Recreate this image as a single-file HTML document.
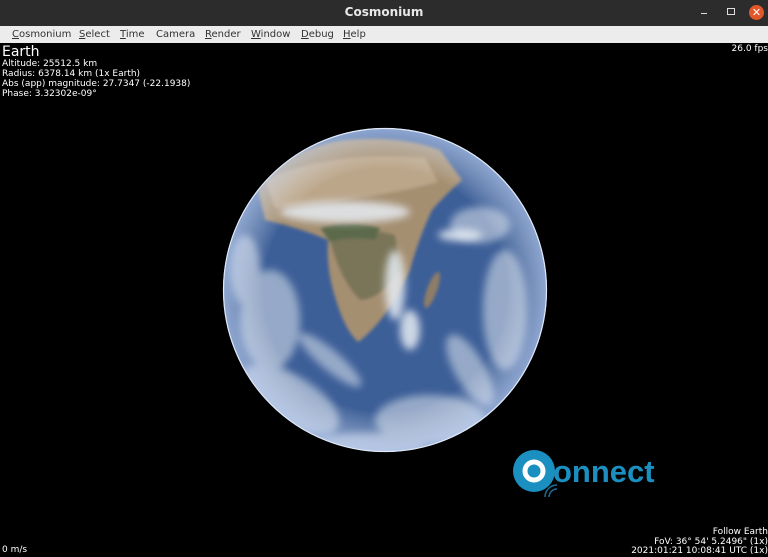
<!DOCTYPE html>
<html><head><meta charset="utf-8"><style>
body{margin:0;width:768px;height:555px;background:#000;overflow:hidden;font-family:"DejaVu Sans","Liberation Sans",sans-serif;position:relative}
.title{position:absolute;top:0;left:0;width:768px;height:26px;background:#2c2c2c;color:#e8e8e8;font-weight:bold;font-size:12px;text-align:center;line-height:25px}
.menu{position:absolute;top:26px;left:0;width:768px;height:17px;background:#ececec;font-size:10px;color:#333;line-height:17px}
.menu span{position:absolute;top:0}
.info{position:absolute;color:#fff;font-size:9px;line-height:10px}
</style></head><body>
<div class="title">Cosmonium</div>
<div style="position:absolute;left:701px;top:13px;width:6px;height:1px;background:#ddd"></div>
<div style="position:absolute;left:727px;top:8px;width:6px;height:5px;border:1px solid #ddd"></div>
<div style="position:absolute;left:749px;top:5px;width:15px;height:15px;border-radius:50%;background:#e2572a;color:#fff;font-size:11px;line-height:15px;text-align:center">✕</div>
<div class="menu">
<span style="left:12px"><u>C</u>osmonium</span><span style="left:79px"><u>S</u>elect</span><span style="left:120px"><u>T</u>ime</span><span style="left:156px">Camera</span><span style="left:205px"><u>R</u>ender</span><span style="left:251px"><u>W</u>indow</span><span style="left:301px"><u>D</u>ebug</span><span style="left:343px"><u>H</u>elp</span>
</div>
<div class="info" style="left:2px;top:45px;font-size:14px;line-height:15px">Earth</div>
<div class="info" style="left:2px;top:59px">Altitude: 25512.5 km<br>Radius: 6378.14 km (1x Earth)<br>Abs (app) magnitude: 27.7347 (-22.1938)<br>Phase: 3.32302e-09°</div>
<div class="info" style="right:0;top:44px">26.0 fps</div>
<div class="info" style="right:0;top:528px;text-align:right;line-height:9.5px">Follow Earth<br>FoV: 36° 54' 5.2496" (1x)<br>2021:01:21 10:08:41 UTC (1x)</div>
<div class="info" style="left:2px;top:545px">0 m/s</div>
<svg width="768" height="555" style="position:absolute;left:0;top:0">
<defs>
<filter id="b"><feGaussianBlur stdDeviation="4"/></filter>
<filter id="b2"><feGaussianBlur stdDeviation="1.5"/></filter>
<clipPath id="c"><circle cx="385" cy="290" r="161"/></clipPath>
<radialGradient id="g" cx="0.5" cy="0.5" r="0.5"><stop offset="0.75" stop-color="#fff" stop-opacity="0"/><stop offset="1" stop-color="#cfe0ff" stop-opacity="0.55"/></radialGradient>
</defs>
<circle cx="385" cy="290" r="162" fill="#3d5f98"/>
<g clip-path="url(#c)">
<g filter="url(#b)" fill="#b4c2d8" opacity="0.75">
<ellipse cx="270" cy="320" rx="30" ry="50"/><ellipse cx="290" cy="400" rx="55" ry="25" transform="rotate(30 290 400)"/>
<ellipse cx="430" cy="420" rx="55" ry="25"/><ellipse cx="505" cy="310" rx="22" ry="60"/>
<ellipse cx="480" cy="225" rx="30" ry="18"/><ellipse cx="245" cy="270" rx="15" ry="35"/>
<ellipse cx="370" cy="445" rx="55" ry="12"/><ellipse cx="470" cy="370" rx="15" ry="40" transform="rotate(-30 470 370)"/>
<ellipse cx="330" cy="360" rx="40" ry="10" transform="rotate(40 330 360)"/>
</g>
<g filter="url(#b2)">
<path d="M258 190 Q285 148 345 140 Q400 135 440 150 L462 180 Q445 195 432 210 Q418 240 410 270 L395 300 Q375 330 358 342 Q345 330 336 300 Q326 270 328 240 Q300 228 265 220 Z" fill="#a58f71"/>
<path d="M265 180 Q330 150 425 158 L438 182 Q400 192 360 198 Q320 205 275 208 Z" fill="#bba68a"/>
<path d="M330 240 Q360 225 395 235 L400 270 Q380 300 360 300 Q340 280 330 240Z" fill="#7a7458"/>
<path d="M320 228 Q350 218 380 228 L375 240 Q350 236 330 242Z" fill="#5c6a4c"/>
<ellipse cx="432" cy="290" rx="5" ry="19" fill="#8e7d66" transform="rotate(20 432 290)"/>
</g>
<g filter="url(#b)" fill="#e6ecf3" opacity="0.85">
<ellipse cx="345" cy="212" rx="65" ry="11"/><ellipse cx="395" cy="285" rx="10" ry="35"/>
<ellipse cx="460" cy="235" rx="22" ry="6"/><ellipse cx="410" cy="330" rx="10" ry="20"/>
</g>
</g>
<circle cx="385" cy="290" r="162" fill="url(#g)"/>
<circle cx="385" cy="290" r="161.5" fill="none" stroke="#dfe9f7" stroke-width="1.2"/>
<circle cx="534" cy="471" r="21" fill="#1a8fc0"/>
<circle cx="534" cy="471" r="9" fill="none" stroke="#fff" stroke-width="5"/>
<text x="553" y="482" fill="#1a8fc0" font-family="Liberation Sans, sans-serif" font-weight="bold" font-size="31">onnect</text>
<path d="M545 497 A12 12 0 0 1 557 485 M549 497 A8 8 0 0 1 557 489" stroke="#1a6f99" stroke-width="1.5" fill="none"/>
</svg>
</body></html>
